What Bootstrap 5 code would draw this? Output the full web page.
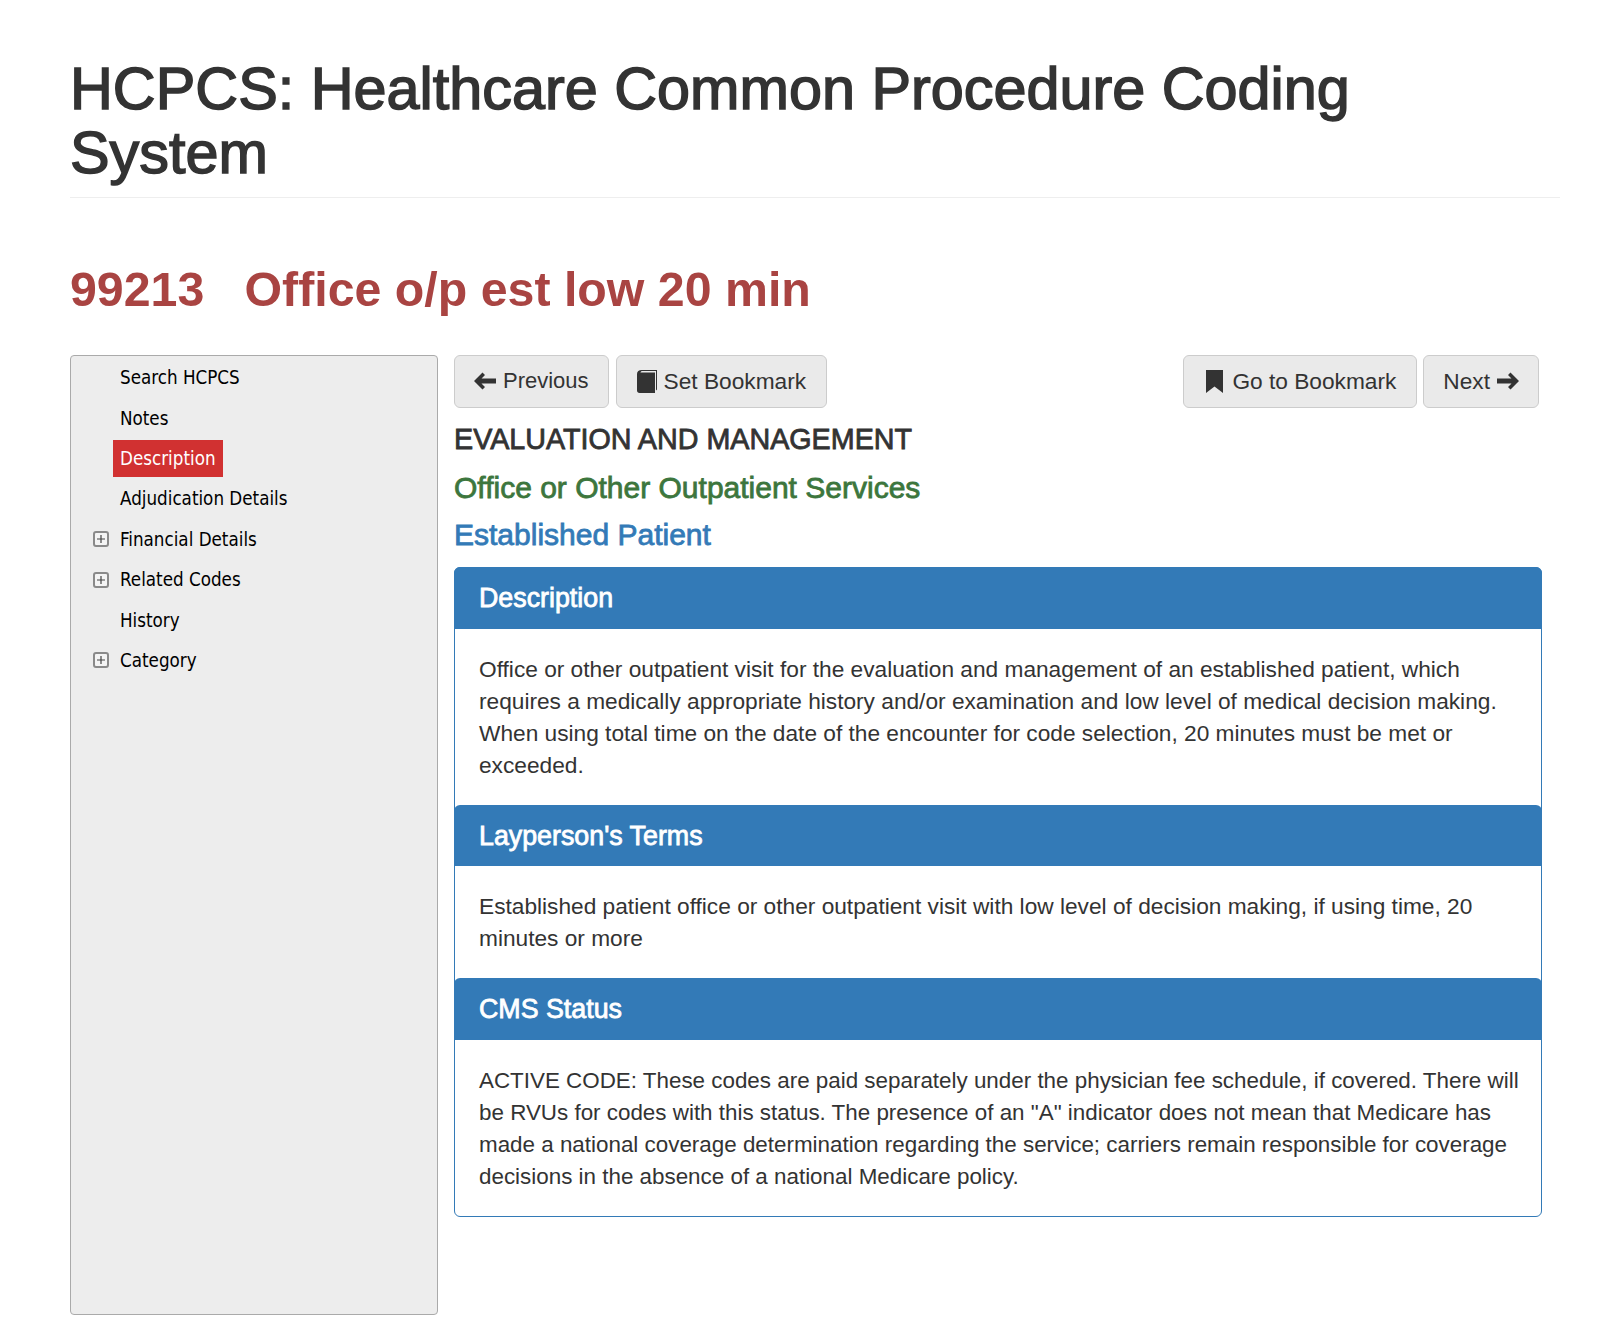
<!DOCTYPE html>
<html lang="en"><head><meta charset="utf-8"><title>HCPCS</title>
<link rel="stylesheet" href="https://cdn.jsdelivr.net/npm/bootstrap@5.3.0/dist/css/bootstrap.min.css">
<style>
body{font-family:"Liberation Sans",Arial,sans-serif;color:#333;background:#fff;font-size:22.7px;line-height:32px}
.page-wrap{padding:57px 60px 0 70px}
.page-title{font-size:59.35px;line-height:63.5px;font-weight:400;-webkit-text-stroke:1.5px #333;margin:0;padding-bottom:13px;border-bottom:1px solid #eee}
.code-title{font-size:48.3px;line-height:56px;font-weight:700;color:#a94442;margin:63px 0 38px;white-space:pre}
.side-box{width:368px;height:960px;flex:none;background:#ededed;border:1px solid #aaa;border-radius:4px;padding:1.5px 0 0 22px;font-family:"DejaVu Sans",sans-serif;font-size:18.65px;color:#000;font-stretch:condensed}
.side-row{height:40.4px;display:flex;align-items:center;line-height:1}
.side-ico{width:16px;height:16px;flex:none;margin-right:11px;display:flex}
.side-lab{padding:9px 7px;margin-left:-7px;line-height:19px}
.side-lab.is-on{background:#d13131;color:#fff}
.main-col{width:1088px;margin-left:16px}
.tool-btn{font-size:22.7px;line-height:32px;color:#333;background:#eaeaea;border:1px solid #ccc;border-radius:6px;padding:0 20px 1px;height:53px;display:inline-flex;align-items:center;gap:7px}
.tool-btn svg{fill:#333;flex:none}
.tool-prev{font-size:22px;padding-left:19px;padding-right:19px}
.tool-go{padding-left:22px;gap:9px}
.tool-next{padding-left:19px;padding-right:19px}
.tool-row{width:1085px;margin-bottom:13px}
.tool-set-l{gap:7px}
.tool-set-r{gap:6px}
.sect-a,.sect-b,.sect-c{font-size:30px;line-height:36px;margin:0 0 11px;font-weight:400;-webkit-text-stroke:.8px}
.sect-a{color:#333;font-size:28.7px;margin-bottom:13px}
.sect-b{color:#3c763d}
.sect-c{color:#337ab7;margin-bottom:14px}
.info-panel{border:1px solid #337ab7;border-radius:6px;background:#fff}
.info-head{background:#337ab7;color:#fff;font-size:26.8px;line-height:36px;padding:13px 24px 13px 25px;border-radius:6px 6px 0 0;margin:-1px -1px 0;-webkit-text-stroke:.8px #fff}
.info-head.head-short{padding-bottom:12px}
.info-body{padding:24px;color:#333}
.info-body.body-a,.info-body.body-b{padding-bottom:25px}
.info-body.body-c{padding:25px 17px 23px 24px}
.info-body p{margin:0}
.info-body p.tight-text{font-size:22.4px}
</style></head>
<body>
<div class="page-wrap">
<h1 class="page-title">HCPCS: Healthcare Common Procedure Coding<br>System</h1>
<h2 class="code-title">99213   Office o/p est low 20 min</h2>
<div class="d-flex">
<aside class="side-box">
<ul class="list-unstyled m-0">
<li class="side-row"><span class="side-ico"></span><span class="side-lab">Search HCPCS</span></li>
<li class="side-row"><span class="side-ico"></span><span class="side-lab">Notes</span></li>
<li class="side-row"><span class="side-ico"></span><span class="side-lab is-on">Description</span></li>
<li class="side-row"><span class="side-ico"></span><span class="side-lab">Adjudication Details</span></li>
<li class="side-row"><span class="side-ico"><svg width="16" height="16" viewBox="0 0 16 16"><rect x="1" y="1" width="14" height="14" rx="2" fill="#f4f4f4" stroke="#8a8a8a" stroke-width="2"/><path d="M8 4v8M4 8h8" stroke="#444" stroke-width="1.2"/></svg></span><span class="side-lab">Financial Details</span></li>
<li class="side-row"><span class="side-ico"><svg width="16" height="16" viewBox="0 0 16 16"><rect x="1" y="1" width="14" height="14" rx="2" fill="#f4f4f4" stroke="#8a8a8a" stroke-width="2"/><path d="M8 4v8M4 8h8" stroke="#444" stroke-width="1.2"/></svg></span><span class="side-lab">Related Codes</span></li>
<li class="side-row"><span class="side-ico"></span><span class="side-lab">History</span></li>
<li class="side-row"><span class="side-ico"><svg width="16" height="16" viewBox="0 0 16 16"><rect x="1" y="1" width="14" height="14" rx="2" fill="#f4f4f4" stroke="#8a8a8a" stroke-width="2"/><path d="M8 4v8M4 8h8" stroke="#444" stroke-width="1.2"/></svg></span><span class="side-lab">Category</span></li>
</ul>
</aside>
<main class="main-col">
<div class="tool-row d-flex justify-content-between">
<div class="d-flex tool-set-l">
<button class="btn tool-btn tool-prev"><svg width="22" height="18" viewBox="0 0 22 18"><path d="M0 9 8.500 .5 11 3 7.500 6.500H22v5H7.500L11 15l-2.500 2.500z"/></svg>Previous</button>
<button class="btn tool-btn"><svg width="20" height="23" viewBox="0 0 20 23"><path d="M4.500 0H20v19.500l-1 1V1H5.500C4.300 1 3.600 1.600 3.400 2.500H18V23H2.500C1 23 0 22 0 20.500V4C0 1.500 2 0 4.500 0z"/></svg>Set Bookmark</button>
</div>
<div class="d-flex tool-set-r">
<button class="btn tool-btn tool-go"><svg width="17" height="23" viewBox="0 0 17 23"><path d="M0 0h17v23l-8.500-6.500L0 23z"/></svg>Go to Bookmark</button>
<button class="btn tool-btn tool-next">Next<svg width="22" height="18" viewBox="0 0 22 18"><path d="M22 9 13.500 .5 11 3l3.500 3.500H0v5h14.500L11 15l2.500 2.500z"/></svg></button>
</div>
</div>
<h3 class="sect-a">EVALUATION AND MANAGEMENT</h3>
<h3 class="sect-b">Office or Other Outpatient Services</h3>
<h3 class="sect-c">Established Patient</h3>
<section class="info-panel">
<div class="info-head">Description</div>
<div class="info-body body-a"><p>Office or other outpatient visit for the evaluation and management of an established patient, which requires a medically appropriate history and/or examination and low level of medical decision making. When using total time on the date of the encounter for code selection, 20 minutes must be met or exceeded.</p></div>
<div class="info-head head-short">Layperson's Terms</div>
<div class="info-body body-b"><p>Established patient office or other outpatient visit with low level of decision making, if using time, 20 minutes or more</p></div>
<div class="info-head">CMS Status</div>
<div class="info-body body-c"><p class="tight-text">ACTIVE CODE: These codes are paid separately under the physician fee schedule, if covered. There will be RVUs for codes with this status. The presence of an "A" indicator does not mean that Medicare has made a national coverage determination regarding the service; carriers remain responsible for coverage decisions in the absence of a national Medicare policy.</p></div>
</section>
</main>
</div>
</div>
<script src="https://cdn.jsdelivr.net/npm/bootstrap@5.3.0/dist/js/bootstrap.bundle.min.js"></script>
</body></html>
